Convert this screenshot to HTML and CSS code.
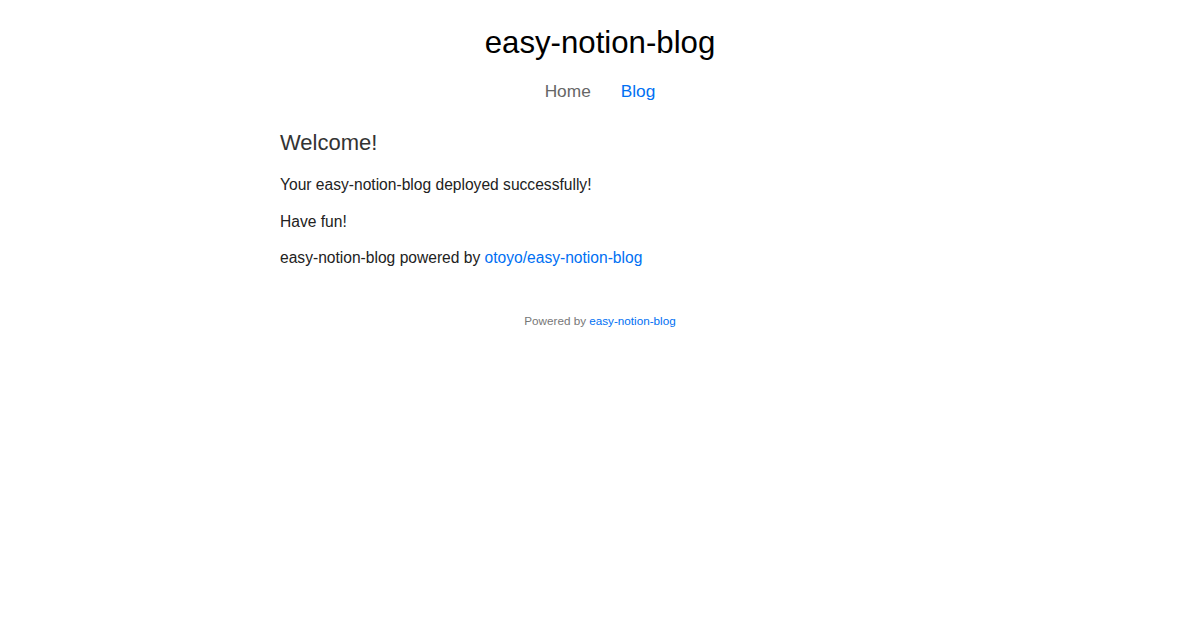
FILE: index.html
```html
<!DOCTYPE html>
<html lang="en">
<head>
<meta charset="utf-8">
<title>easy-notion-blog</title>
<link rel="stylesheet" href="styles.css">
</head>
<body>
<div class="page">
  <header class="site-header">
    <h1 class="site-title">easy-notion-blog</h1>
    <nav class="site-nav">
      <a class="nav-link nav-home" href="#">Home</a>
      <a class="nav-link nav-blog" href="#">Blog</a>
    </nav>
  </header>
  <main class="content">
    <h2 class="welcome">Welcome!</h2>
    <p class="para">Your easy-notion-blog deployed successfully!</p>
    <p class="para">Have fun!</p>
    <p class="para">easy-notion-blog powered by <a class="link" href="#">otoyo/easy-notion-blog</a></p>
  </main>
  <footer class="site-footer">
    <span>Powered by <a class="link" href="#">easy-notion-blog</a></span>
  </footer>
</div>
</body>
</html>
```
FILE: styles.css
```css
html, body {
  margin: 0;
  padding: 0;
  background: #fff;
}
body {
  font-family: "Liberation Sans", Arial, sans-serif;
  color: #333;
}
.page {
  width: 640px;
  margin: 0 auto;
}
.site-header {
  display: flex;
  flex-direction: column;
  align-items: center;
  padding-top: 24px;
}
.site-title {
  margin: 0;
  font-size: 31.2px;
  font-weight: 400;
  line-height: 37px;
  color: #000;
}
.site-nav {
  display: flex;
  gap: 30px;
  margin-top: 18px;
}
.nav-link {
  font-size: 17.3px;
  line-height: 24px;
  text-decoration: none;
}
.nav-home { color: #666; }
.nav-blog { color: #0070f3; }
.content {
  margin-top: 25px;
}
.welcome {
  margin: 0 0 15px;
  font-size: 22px;
  font-weight: 400;
  line-height: 30px;
  color: #333;
}
.para {
  margin: 0 0 12.5px;
  font-size: 15.6px;
  line-height: 24px;
  color: #222;
}
.link {
  color: #0070f3;
  text-decoration: none;
}
.site-footer {
  display: flex;
  justify-content: center;
  margin-top: 43px;
  font-size: 11.7px;
  line-height: 16px;
  color: #777;
}
```
